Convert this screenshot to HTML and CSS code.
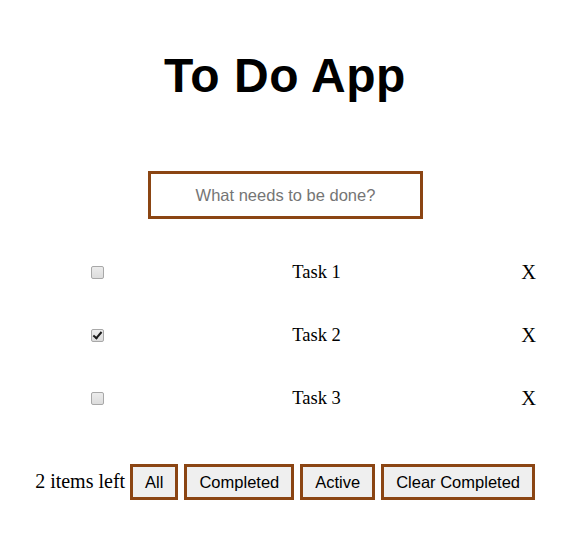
FILE: index.html
```html
<!DOCTYPE html>
<html lang="en">
<head>
<meta charset="utf-8">
<title>To Do App</title>
<link rel="stylesheet" href="styles.css">
</head>
<body>
<div class="app">
  <h1 class="title">To Do App</h1>
  <div class="new-row">
    <input class="new-todo" type="text" placeholder="What needs to be done?">
  </div>
  <ul class="todo-list">
    <li class="todo">
      <input class="toggle" type="checkbox">
      <span class="todo-text">Task 1</span>
      <span class="remove">X</span>
    </li>
    <li class="todo">
      <input class="toggle" type="checkbox" checked>
      <span class="todo-text">Task 2</span>
      <span class="remove">X</span>
    </li>
    <li class="todo">
      <input class="toggle" type="checkbox">
      <span class="todo-text">Task 3</span>
      <span class="remove">X</span>
    </li>
  </ul>
  <div class="footer">
    <span class="count">2 items left</span>
    <button class="btn">All</button>
    <button class="btn">Completed</button>
    <button class="btn">Active</button>
    <button class="btn">Clear Completed</button>
  </div>
</div>
</body>
</html>
```
FILE: styles.css
```css
html, body {
  margin: 0;
  padding: 0;
  background: #ffffff;
}

body {
  font-family: "Liberation Serif", "Times New Roman", serif;
  color: #000;
}

.app {
  width: 570px;
  padding-top: 48px;
}

.title {
  margin: 0;
  text-align: center;
  font-family: "Comic Sans MS", "Liberation Sans", Arial, sans-serif;
  font-weight: bold;
  font-size: 48px;
  line-height: 56px;
  letter-spacing: 0.5px;
  color: #000;
}

.new-row {
  display: flex;
  justify-content: center;
  margin-top: 67px;
  padding-left: 1px;
}

.new-todo {
  box-sizing: border-box;
  width: 275px;
  height: 48px;
  border: 3px solid #8b4513;
  padding: 0 10px;
  font-family: "Liberation Sans", Arial, sans-serif;
  font-size: 16.5px;
  text-align: center;
  outline: none;
  background: #fff;
}

.new-todo::placeholder {
  color: #757575;
}

.todo-list {
  list-style: none;
  margin: 22px 0 0 0;
  padding: 0 34px 0 91px;
}

.todo {
  display: grid;
  grid-template-columns: 13px 1fr auto;
  align-items: center;
  height: 63px;
}

.toggle {
  appearance: none;
  -webkit-appearance: none;
  box-sizing: border-box;
  width: 13px;
  height: 13px;
  margin: 0;
  border: 1px solid #a8a8a8;
  border-radius: 2px;
  background: linear-gradient(#ececec, #dcdcdc);
  position: relative;
}

.toggle:checked::after {
  content: "";
  position: absolute;
  left: 3px;
  top: 0px;
  width: 3px;
  height: 7px;
  border-right: 2.5px solid #1a1a1a;
  border-bottom: 2.5px solid #1a1a1a;
  transform: rotate(40deg);
}

.todo-text {
  text-align: center;
  padding-left: 8px;
  font-size: 18.5px;
}

.remove {
  font-size: 20.5px;
}

.footer {
  display: flex;
  justify-content: flex-end;
  align-items: baseline;
  gap: 6px;
  margin-top: 34px;
  padding-right: 35px;
}

.count {
  font-size: 20px;
  margin-right: -1px;
}

.btn {
  box-sizing: border-box;
  height: 36px;
  padding: 0 12px;
  border: 3px solid #8b4513;
  background: #efefef;
  font-family: "Liberation Sans", Arial, sans-serif;
  font-size: 16.5px;
  color: #000;
  border-radius: 0;
}
```
